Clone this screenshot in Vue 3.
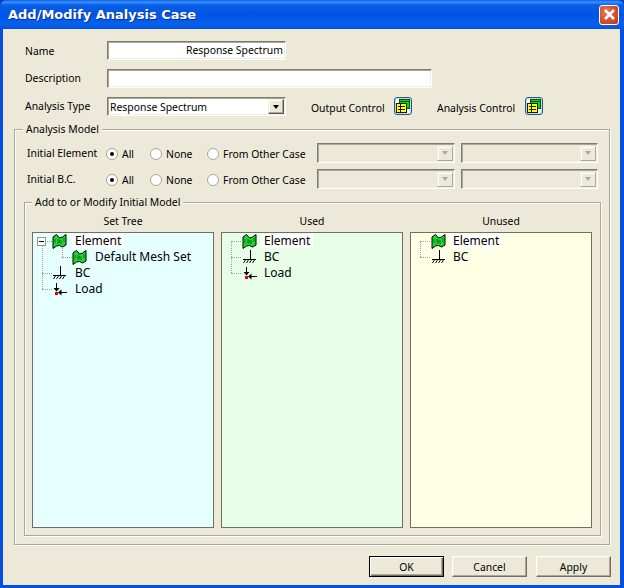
<script setup>
const radioRows = [
  { label: 'Initial Element' },
  { label: 'Initial B.C.' },
]
const panels = [
  { title: 'Set Tree', cls: 'cyan', kind: 'set', nodes: [
    { text: 'Element', icon: 'element', sel: true },
    { text: 'Default Mesh Set', icon: 'element', child: true },
    { text: 'BC', icon: 'bc' },
    { text: 'Load', icon: 'load' },
  ] },
  { title: 'Used', cls: 'green', kind: 'used', nodes: [
    { text: 'Element', icon: 'element', sel: true },
    { text: 'BC', icon: 'bc' },
    { text: 'Load', icon: 'load' },
  ] },
  { title: 'Unused', cls: 'yellow', kind: 'unused', nodes: [
    { text: 'Element', icon: 'element', sel: true },
    { text: 'BC', icon: 'bc' },
  ] },
]
</script>

<template>
  <div class="window">
    <header class="titlebar">
      <span class="title">Add/Modify Analysis Case</span>
      <span class="close">
        <svg width="13" height="13" viewBox="0 0 13 13"><path d="M2 2 L11 11 M11 2 L2 11" stroke="#fff" stroke-width="2.6" fill="none" /></svg>
      </span>
    </header>

    <main class="body">
      <div class="form-row">
        <span class="form-label">Name</span>
        <div class="field name-field">Response Spectrum</div>
      </div>
      <div class="form-row">
        <span class="form-label">Description</span>
        <div class="field desc-field"></div>
      </div>
      <div class="form-row">
        <span class="form-label">Analysis Type</span>
        <div class="field type-field">
          <span>Response Spectrum</span>
          <span class="drop"><i class="arrow"></i></span>
        </div>
        <span class="ctl-label output">Output Control</span>
        <span class="ctl-btn">
          <svg width="14" height="14" viewBox="0 0 14 14">
            <rect x="3.5" y="0.5" width="10" height="9" fill="#00e000" stroke="#06500a" />
            <path d="M4 2.5 H13" stroke="#06500a" />
            <rect x="0.5" y="4.5" width="10" height="9" fill="#ffff00" stroke="#1a1a00" />
            <path d="M2 7.5 H9 M2 10.5 H9 M4.5 5 V13" stroke="#1a1a00" stroke-width="1" />
          </svg>
        </span>
        <span class="ctl-label analysis">Analysis Control</span>
        <span class="ctl-btn">
          <svg width="14" height="14" viewBox="0 0 14 14">
            <rect x="3.5" y="0.5" width="10" height="9" fill="#00e000" stroke="#06500a" />
            <path d="M4 2.5 H13" stroke="#06500a" />
            <rect x="0.5" y="4.5" width="10" height="9" fill="#ffff00" stroke="#1a1a00" />
            <path d="M2 7.5 H9 M2 10.5 H9 M4.5 5 V13" stroke="#1a1a00" stroke-width="1" />
          </svg>
        </span>
      </div>

      <section class="group model">
        <span class="legend">Analysis Model</span>
        <div v-for="row in radioRows" :key="row.label" class="radio-row">
          <span class="radio-label">{{ row.label }}</span>
          <span class="radio r-all"><i class="dot on"></i>All</span>
          <span class="radio r-none"><i class="dot"></i>None</span>
          <span class="radio r-other"><i class="dot"></i>From Other Case</span>
          <div class="field off first"><span class="drop off-drop"><i class="arrow"></i></span></div>
          <div class="field off second"><span class="drop off-drop"><i class="arrow"></i></span></div>
        </div>

        <section class="group inner">
          <span class="legend">Add to or Modify Initial Model</span>
          <div class="columns">
            <div v-for="p in panels" :key="p.title" class="column">
              <div class="col-title">{{ p.title }}</div>
              <div class="panel" :class="[p.cls, p.kind]">
                <span v-if="p.kind === 'set'" class="expander"><i></i></span>
                <span class="vline" :class="p.kind"></span>
                <span v-if="p.kind === 'set'" class="vline sub"></span>
                <div v-for="n in p.nodes" :key="n.text" class="node" :class="{ child: n.child }">
                  <span class="hline"></span>
                  <svg v-if="n.icon === 'element'" class="icon" width="15" height="15" viewBox="0 0 15 15">
                    <path d="M1 3 L4.5 0.5 L7.5 4 L10.5 3 L14 0.5 V11 L10.5 13 L7.5 11.5 L4.5 12 L1 14.5 Z" fill="#1fd52f" stroke="#000" stroke-width="1" />
                    <path d="M6 5 V10 M9 6 V10 M7 7 L8 9 M6 8 L8 6 M3 5 V9 M12 4 V8" stroke="#0b7a1a" stroke-width="1" fill="none" />
                  </svg>
                  <svg v-else-if="n.icon === 'bc'" class="icon" width="15" height="15" viewBox="0 0 15 15">
                    <path d="M8.5 0 V9 M1 9.5 H14 M3.5 10 L1.5 13 M6.5 10 L4.5 13 M9.5 10 L7.5 13 M12.5 10 L10.5 13" stroke="#000" stroke-width="1" fill="none" />
                  </svg>
                  <svg v-else class="icon" width="15" height="15" viewBox="0 0 15 15">
                    <path d="M4.5 1 V9" stroke="#000" stroke-width="1" fill="none" />
                    <path d="M1.5 6 H7.5 L4.5 9.5 Z" fill="#000" />
                    <path d="M8 10.5 H15" stroke="#000" stroke-width="1" fill="none" />
                    <path d="M6 10.5 L9.5 7.5 V13.5 Z" fill="#000" />
                    <rect x="3" y="10" width="3" height="3" fill="#e00000" />
                  </svg>
                  <span class="node-text" :class="{ selected: n.sel }">{{ n.text }}</span>
                </div>
              </div>
            </div>
          </div>
        </section>
      </section>

      <footer class="actions">
        <span class="btn default">OK</span>
        <span class="btn">Cancel</span>
        <span class="btn">Apply</span>
      </footer>
    </main>
  </div>
</template>

<style>
html, body { margin: 0; padding: 0; background: #0a3fc0; }
</style>

<style scoped>
.window {
  width: 624px;
  height: 588px;
  display: flex;
  flex-direction: column;
  box-sizing: border-box;
  background: #0350e0;
  border-radius: 7px 7px 0 0;
  overflow: hidden;
  font: 10.4px "Noto Sans", Tahoma, sans-serif;
  color: #000;
}
.titlebar {
  height: 29px;
  flex: none;
  display: flex;
  align-items: center;
  justify-content: space-between;
  padding: 0 5px 0 8px;
  background: linear-gradient(#0a5de8 0, #3a93ff 2px, #0a5fe6 5px, #0054e3 14px, #0461ee 24px, #0352d8 29px);
}
.title {
  color: #fff;
  font: bold 13px "DejaVu Sans", sans-serif;
  text-shadow: 1px 1px 0 #0f2f90;
}
.close {
  width: 20px;
  height: 20px;
  box-sizing: border-box;
  display: flex;
  align-items: center;
  justify-content: center;
  border: 1px solid #fff;
  border-radius: 3px;
  background: radial-gradient(circle at 35% 35%, #e87a5c, #d2492a 60%, #b83a1c);
}
.body {
  flex: 1;
  margin: 0 4px 3px 3px;
  background: #ece9d8;
  padding: 12px 0 0 11px;
  box-sizing: border-box;
  min-height: 0;
}
.form-row {
  display: flex;
  align-items: center;
  height: 19px;
  margin-bottom: 9px;
  padding-left: 11px;
}
.form-label { width: 82px; flex: none; }
.form-row:not(:first-child) .form-label { padding-bottom: 2px; }
.field {
  box-sizing: border-box;
  background: #fff;
  border: 1px solid;
  border-color: #7e7c70 #fff #fff #7e7c70;
  box-shadow: inset 1px 1px 0 #aca899, inset -1px -1px 0 #f1efe2;
  display: flex;
  align-items: center;
  height: 100%;
}
.name-field { width: 179px; justify-content: flex-end; padding: 0 2px 2px 0; }
.desc-field { width: 325px; }
.type-field { width: 179px; padding-left: 2px; justify-content: space-between; }
.drop {
  width: 16px;
  height: 15px;
  margin-right: 1px;
  flex: none;
  box-sizing: border-box;
  display: flex;
  align-items: center;
  justify-content: center;
  background: #ece9d8;
  border: 1px solid;
  border-color: #f1efe2 #5a584f #5a584f #f1efe2;
  box-shadow: inset -1px -1px 0 #aca899, inset 1px 1px 0 #fff;
}
.arrow {
  width: 0;
  height: 0;
  border: 3.5px solid transparent;
  border-top: 4px solid #000;
  border-bottom: 0;
}
.ctl-label { flex: none; padding-top: 2px; }
.output { margin-left: 25px; width: 83px; }
.analysis { margin-left: 25px; width: 88px; }
.ctl-btn {
  width: 18px;
  height: 18px;
  box-sizing: border-box;
  flex: none;
  align-self: flex-start;
  display: flex;
  align-items: center;
  justify-content: center;
  border: 1px solid #1f5b8f;
  border-radius: 3px;
  background: #f4f8fb;
  box-shadow: inset 0 0 0 1px #c8d8e8;
}
.group {
  position: relative;
  box-sizing: border-box;
  border: 1px solid #aca899;
  box-shadow: 1px 1px 0 #fff, inset 1px 1px 0 #fff;
}
.legend {
  position: absolute;
  top: -8px;
  background: #ece9d8;
  padding: 0 3px;
  line-height: 15px;
  white-space: nowrap;
}
.model {
  width: 596px;
  height: 416px;
  margin-top: 13px;
  padding: 13px 9px 0 9px;
}
.model > .legend { left: 8px; }
.radio-row {
  display: flex;
  align-items: center;
  height: 20px;
  margin-bottom: 6px;
  padding-left: 3px;
}
.radio-label { width: 79px; flex: none; }
.radio {
  display: flex;
  align-items: center;
  flex: none;
  padding-top: 1px;
}
.r-all { width: 44px; }
.r-none { width: 57px; }
.r-other { width: 110px; }
.dot {
  width: 12px;
  height: 12px;
  flex: none;
  margin-right: 4px;
  border-radius: 50%;
  background: #fff;
  border: 1px solid #a8a69a;
  box-sizing: border-box;
  display: flex;
  align-items: center;
  justify-content: center;
}
.dot.on::after {
  content: "";
  width: 4px;
  height: 4px;
  border-radius: 50%;
  background: #000;
}
.off { background: #ece9d8; justify-content: flex-end; }
.first { width: 138px; margin-right: 6px; }
.second { width: 137px; }
.off-drop { border-color: #f1efe2 #aca899 #aca899 #f1efe2; box-shadow: inset 1px 1px 0 #fff; }
.off-drop .arrow { border-top-color: #aca899; }
.inner {
  width: 577px;
  height: 334px;
  margin-top: 13px;
  padding: 0 7px;
}
.inner > .legend { left: 7px; }
.columns { display: flex; gap: 7px; }
.column { width: 182px; flex: none; }
.col-title {
  height: 29px;
  padding-top: 11px;
  box-sizing: border-box;
  text-align: center;
  line-height: 15px;
}
.panel {
  position: relative;
  height: 296px;
  box-sizing: border-box;
  border: 1px solid #716f64;
  font-size: 12px;
}
.cyan { background: #e6ffff; }
.green { background: #e6ffe6; }
.yellow { background: #ffffe6; }
.node {
  position: relative;
  height: 16px;
  display: flex;
  align-items: center;
}
.set .node { padding-left: 19px; }
.set .node.child { padding-left: 39px; }
.used .node, .unused .node { padding-left: 20px; }
.used .node-text, .unused .node-text { margin-left: 4px; }
.icon { flex: none; }
.node-text { margin-left: 5px; padding: 0 3px; height: 14px; line-height: 13px; }
.selected { background: #fff; }
.hline {
  position: absolute;
  top: 8px;
  left: 9px;
  width: 10px;
  border-top: 1px dotted #a0a0a0;
}
.child .hline { left: 29px; width: 10px; }
.vline {
  position: absolute;
  left: 9px;
  width: 0;
  border-left: 1px dotted #a0a0a0;
}
.vline.set { top: 13px; height: 43px; }
.vline.used { top: 8px; height: 32px; }
.vline.unused { top: 8px; height: 16px; }
.vline.sub { left: 29px; top: 15px; height: 9px; }
.expander {
  position: absolute;
  z-index: 1;
  left: 4px;
  top: 4px;
  width: 9px;
  height: 9px;
  box-sizing: border-box;
  border: 1px solid #9a9888;
  background: #fff;
  display: flex;
  align-items: center;
  justify-content: center;
}
.expander i { width: 5px; height: 1px; background: #000; }
.actions {
  display: flex;
  justify-content: flex-end;
  gap: 9px;
  margin-top: 11px;
  padding-right: 9px;
}
.btn {
  width: 75px;
  height: 21px;
  box-sizing: border-box;
  display: flex;
  align-items: center;
  justify-content: center;
  background: #ece9d8;
  border: 1px solid;
  border-color: #fff #716f64 #716f64 #fff;
  box-shadow: inset -1px -1px 0 #aca899, inset 1px 1px 0 #f1efe2;
}
.btn.default {
  margin-right: -1px;
  border: 1px solid #000;
  box-shadow: inset 1px 1px 0 #fff, inset -1px -1px 0 #716f64, inset -2px -2px 0 #aca899;
}
</style>
